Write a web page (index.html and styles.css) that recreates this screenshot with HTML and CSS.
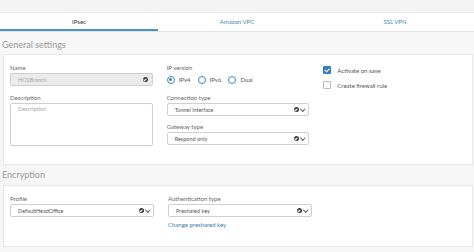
FILE: index.html
```html
<!DOCTYPE html>
<html lang="en">
<head>
  <meta charset="UTF-8">
  <title>IPsec connection</title>
  <link rel="stylesheet" href="styles.css">
</head>
<body>

<div class="topbar"></div>

<div class="tabs">
  <div class="tab active">IPsec</div>
  <div class="tab">Amazon VPC</div>
  <div class="tab">SSL VPN</div>
</div>

<h2 class="section-title">General settings</h2>
<div class="panel general">
  <div class="col">
    <div class="field">
      <label>Name</label>
      <div class="input disabled">
        <span>HO2Branch</span>
        <span class="ok"></span>
      </div>
    </div>
    <div class="field">
      <label>Description</label>
      <div class="textarea">Description</div>
    </div>
  </div>

  <div class="col">
    <div class="field">
      <label>IP version</label>
      <div class="radios">
        <span class="radio checked"></span><span class="rlabel">IPv4</span>
        <span class="radio"></span><span class="rlabel">IPv6</span>
        <span class="radio"></span><span class="rlabel">Dual</span>
      </div>
    </div>
    <div class="field">
      <label>Connection type</label>
      <div class="input select">
        <span>Tunnel interface</span>
        <span class="ok"></span><span class="caret"></span>
      </div>
    </div>
    <div class="field tight">
      <label>Gateway type</label>
      <div class="input select">
        <span>Respond only</span>
        <span class="ok"></span><span class="caret"></span>
      </div>
    </div>
  </div>

  <div class="col checks">
    <div class="check-row"><span class="checkbox checked"></span>Activate on save</div>
    <div class="check-row"><span class="checkbox"></span>Create firewall rule</div>
  </div>
</div>

<h2 class="section-title enc">Encryption</h2>
<div class="panel encryption">
  <div class="col">
    <div class="field">
      <label>Profile</label>
      <div class="input select">
        <span>DefaultHeadOffice</span>
        <span class="ok"></span><span class="caret"></span>
      </div>
    </div>
  </div>
  <div class="col">
    <div class="field">
      <label>Authentication type</label>
      <div class="input select">
        <span>Preshared key</span>
        <span class="ok"></span><span class="caret"></span>
      </div>
      <a class="link" href="#">Change preshared key</a>
    </div>
  </div>
</div>

</body>
</html>
```

FILE: styles.css
```css
body {
  margin: 0;
  font-family: 'Lato', 'Open Sans', sans-serif;
  background: #f7f7f7;
  color: #555;
  width: 474px;
  height: 252px;
  overflow: hidden;
}

.topbar {
  height: 12px;
  background: #f4f4f4;
}

.tabs {
  display: flex;
  background: #fff;
  border-top: 1px solid #ececec;
  border-bottom: 1px solid #e4e4e4;
  height: 18px;
}

.tab {
  flex: 1;
  text-align: center;
  font-size: 6px;
  line-height: 18px;
  height: 16px;
  color: #3b8ab8;
  border-bottom: 2px solid transparent;
}

.tab.active {
  color: #333;
  border-bottom-color: #4a94c4;
}

.section-title {
  margin: 0;
  padding: 8px 2px 0;
  height: 14px;
  font-size: 9px;
  line-height: 10px;
  font-weight: 400;
  color: #999;
}

.section-title.enc {
  padding-top: 5px;
  height: 15px;
  background: #f6f6f6;
}

.panel {
  display: flex;
  gap: 14px;
  background: #fff;
  margin: 0 1px 0 3px;
  border: 1px solid #e8e8e8;
  padding: 9px 6px 0;
}

.panel.general {
  height: 100px;
}

.panel.encryption {
  height: 51px;
}

.col {
  width: 144px;
  display: flex;
  flex-direction: column;
  gap: 8px;
}

.field label {
  display: block;
  font-size: 6px;
  color: #666;
  margin-bottom: 1px;
  line-height: 8px;
}

.field.tight {
  margin-top: -1px;
}

.input {
  height: 11px;
  border: 1px solid #cfcfcf;
  border-radius: 2px;
  display: flex;
  align-items: center;
  padding: 0 4px 0 7px;
  font-size: 5.5px;
  color: #555;
  background: #fff;
}

.input span:first-child {
  flex: 1;
}

.input.disabled {
  background: #ebebeb;
  color: #aaa;
}

.ok {
  width: 5px;
  height: 5px;
  border-radius: 50%;
  background: #3a3a3a;
  position: relative;
}

.ok::after {
  content: '';
  position: absolute;
  left: 1.6px;
  top: 0.7px;
  width: 1px;
  height: 2px;
  border-right: 0.8px solid #fff;
  border-bottom: 0.8px solid #fff;
  transform: rotate(45deg);
}

.caret {
  width: 2.5px;
  height: 2.5px;
  border-right: 1px solid #555;
  border-bottom: 1px solid #555;
  transform: rotate(45deg);
  margin: -2px 0 0 2px;
}

.textarea {
  height: 39px;
  border: 1px solid #cfcfcf;
  border-radius: 2px;
  padding: 2px 7px 0;
  font-size: 5.5px;
  color: #aaa;
}

.radios {
  display: flex;
  align-items: center;
  height: 13px;
  font-size: 6px;
  color: #555;
}

.radio {
  width: 6px;
  height: 6px;
  border: 1px solid #3b8ab8;
  border-radius: 50%;
  margin-right: 4px;
  position: relative;
}

.radio.checked::after {
  content: '';
  position: absolute;
  left: 1.5px;
  top: 1.5px;
  width: 3px;
  height: 3px;
  border-radius: 50%;
  background: #3b8ab8;
}

.rlabel {
  margin-right: 7px;
}

.checks {
  gap: 7px;
  padding-top: 2px;
}

.check-row {
  display: flex;
  align-items: center;
  height: 8px;
  font-size: 6px;
  color: #555;
}

.checkbox {
  width: 6px;
  height: 6px;
  border: 1px solid #bbb;
  border-radius: 1px;
  margin-right: 6px;
  position: relative;
}

.checkbox.checked {
  background: #2f7fb8;
  border-color: #2f7fb8;
}

.checkbox.checked::after {
  content: '';
  position: absolute;
  left: 2px;
  top: 0;
  width: 1.5px;
  height: 3.5px;
  border-right: 1px solid #fff;
  border-bottom: 1px solid #fff;
  transform: rotate(45deg);
}

.link {
  display: block;
  margin-top: 4px;
  font-size: 6px;
  color: #3b7aa8;
  text-decoration: none;
}
```
